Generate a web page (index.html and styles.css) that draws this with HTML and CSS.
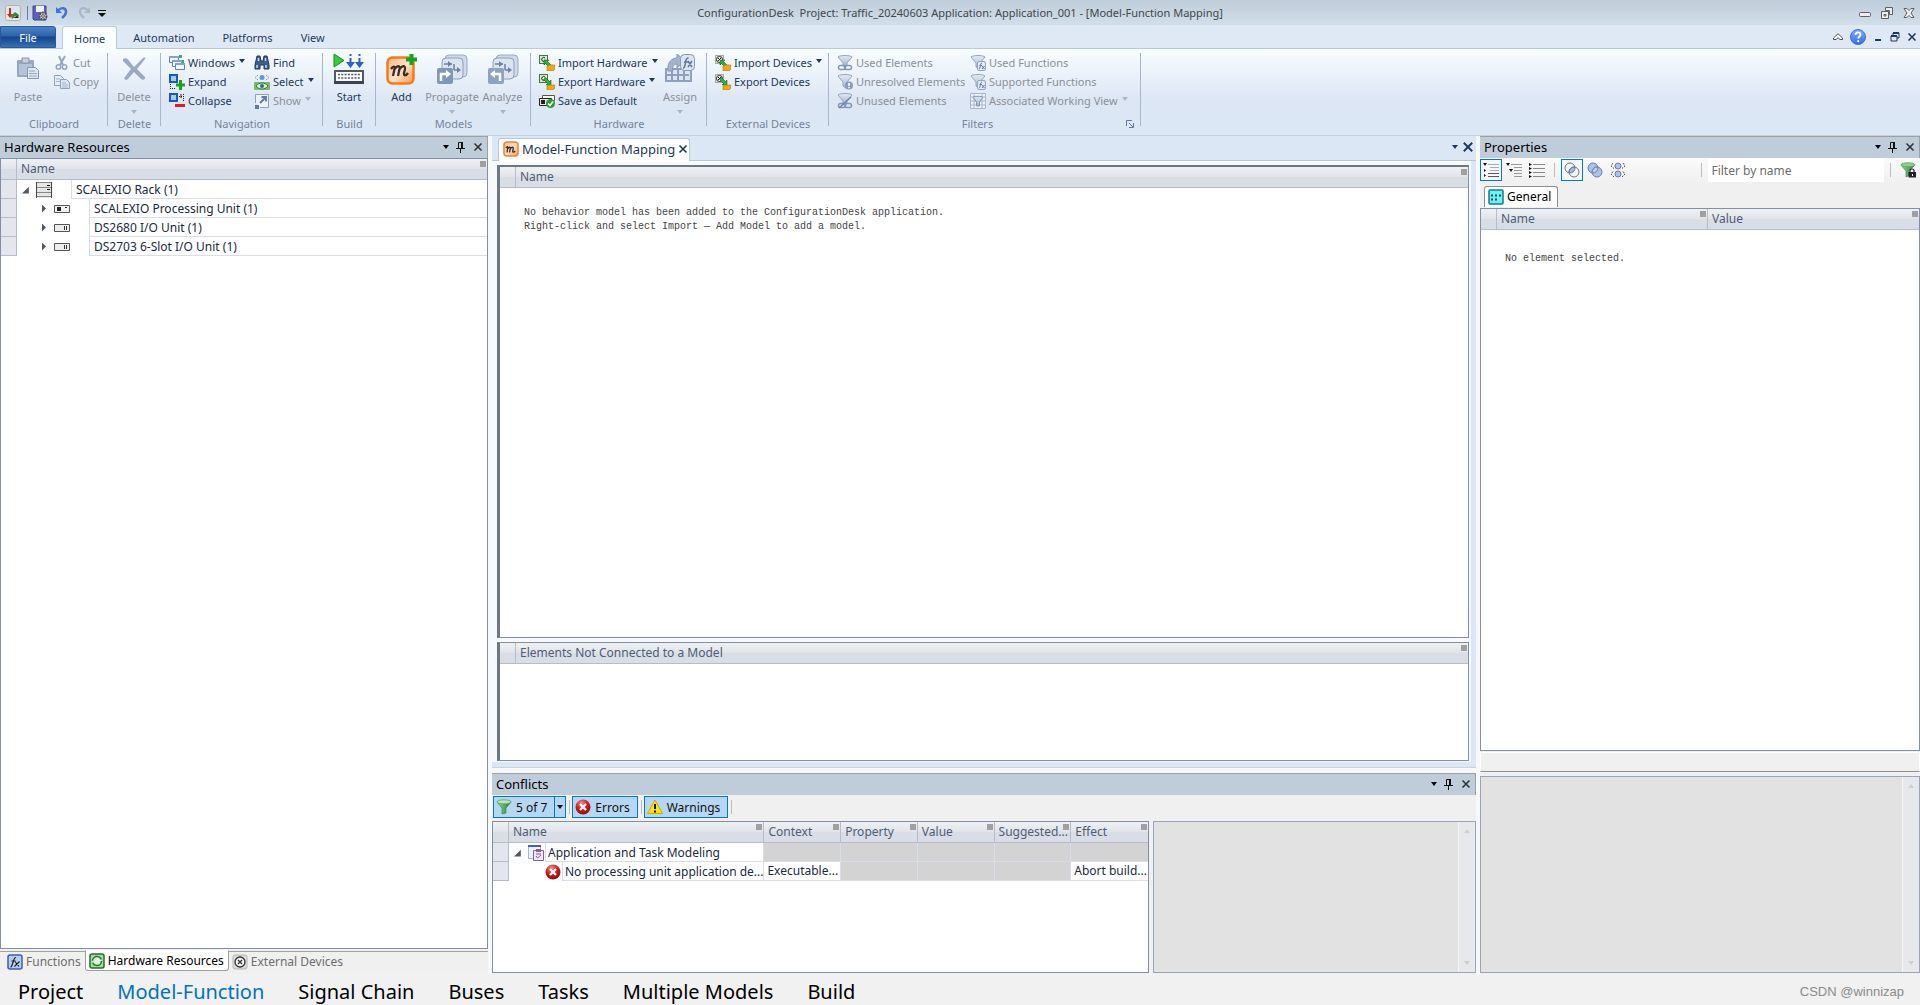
FILE: index.html
```html
<!DOCTYPE html>
<html lang="en">
<head>
    <meta charset="UTF-8">
    <meta name="viewport" content="width=device-width, initial-scale=1.0">
    <title>ConfigurationDesk</title>
    <link rel="stylesheet" href="styles.css">
</head>
<body>

    <!-- Icon sprite -->
    <svg class="sprite" aria-hidden="true">
        <defs>
            <linearGradient id="gOrange" x1="0" y1="0" x2="1" y2="1"><stop offset="0" stop-color="#ffb478"/><stop offset=".5" stop-color="#fde3cb"/><stop offset="1" stop-color="#ff9a4a"/></linearGradient>
            <linearGradient id="gGray" x1="0" y1="0" x2="0" y2="1"><stop offset="0" stop-color="#e4ebf4"/><stop offset="1" stop-color="#a3b2c8"/></linearGradient>
            <linearGradient id="gGreen" x1="0" y1="0" x2="1" y2="0"><stop offset="0" stop-color="#9edc9a"/><stop offset="1" stop-color="#1f7a2c"/></linearGradient>
            <radialGradient id="gRed" cx=".4" cy=".25" r=".8"><stop offset="0" stop-color="#f58a86"/><stop offset=".5" stop-color="#cf1b1b"/><stop offset="1" stop-color="#8f0a0a"/></radialGradient>
            <linearGradient id="gHelp" x1="0" y1="0" x2="0" y2="1"><stop offset="0" stop-color="#83aefc"/><stop offset="1" stop-color="#2f6df0"/></linearGradient>
        </defs>

        <symbol id="app" viewBox="0 0 16 16"><rect x=".5" y=".5" width="15" height="15" rx="2" fill="#e8e6e2" stroke="#b3b0aa"/><path d="M5 2h8v4H5z" fill="#cfeaf7"/><path d="M4 3h2v6h2l-3 4-3-4h2z" fill="#d22"/><path d="M6 11l4-4 4 3-1 3-3-2-3 3z" fill="#2c8a3c"/><path d="M8 13l4-2 2 2z" fill="#222"/></symbol>
        <symbol id="save" viewBox="0 0 16 16"><path d="M1 1h13v14H2l-1-1z" fill="#5a62c0" stroke="#3c4390"/><path d="M4 1h8v6H4z" fill="#eef1fb"/><circle cx="11" cy="11" r="3.5" fill="#c9ccd2" stroke="#4b4f58" stroke-width="2" stroke-dasharray="2 1"/><circle cx="11" cy="11" r="1.3" fill="#fff" stroke="#555"/></symbol>
        <symbol id="undo" viewBox="0 0 16 16"><path d="M4 5.500c3-3.500 8-3 8 1 0 3-2 5-4 6.500" fill="none" stroke="#3f73d2" stroke-width="2.400"/><path d="M2 2v6h6z" fill="#3f73d2"/></symbol>
        <symbol id="redo" viewBox="0 0 16 16"><path d="M12 5.500C9 2 4 2.500 4 6.500c0 3 2 5 4 6.500" fill="none" stroke="#a9b8ca" stroke-width="2.200"/><path d="M14 2v6H8z" fill="#a9b8ca"/></symbol>
        <symbol id="quickmenu" viewBox="0 0 8 8"><path d="M0 1h8v1H0zM0 4h8L4 8z" fill="#111"/></symbol>
        <symbol id="pin" viewBox="0 0 10 12"><path d="M2.500 7V1.500h4V7M0 7.500h9M4.500 8v4" fill="none" stroke="#111"/><path d="M5 1h2v6H5z" fill="#111"/></symbol>
        <symbol id="close" viewBox="0 0 10 10"><path d="M1.500 1.500l7 7M8.500 1.500l-7 7" fill="none" stroke="currentColor" stroke-width="1.600"/></symbol>
        <symbol id="caret" viewBox="0 0 6 4"><path d="M0 0h6L3 4z" fill="currentColor"/></symbol>
        <symbol id="winmin" viewBox="0 0 12 12"><rect x=".5" y="5.500" width="11" height="4" rx="1" fill="#eee" stroke="#5d6166"/></symbol>
        <symbol id="winrestore" viewBox="0 0 12 12"><path d="M4.500.500h7v7h-3v-4h-4z" fill="#eee" stroke="#5d6166"/><path d="M.5 4.500h7v7h-7z" fill="#eee" stroke="#5d6166"/><path d="M3 7.500h2v1.500H3z" fill="none" stroke="#5d6166"/></symbol>
        <symbol id="winclose" viewBox="0 0 12 12"><path d="M1 1.500h3l2 2 2-2h3L8 6l3 4.500H8l-2-2-2 2H1L4 6z" fill="#eee" stroke="#5d6166"/></symbol>
        <symbol id="mdimin" viewBox="0 0 10 10"><path d="M2 7h6v2H2z" fill="#1e395b"/></symbol>
        <symbol id="mdirestore" viewBox="0 0 10 10"><path d="M3 3V1h6v5H7M1 4h6v5H1z" fill="none" stroke="#1e395b"/><path d="M3 1h6M1 4h6" stroke="#1e395b" stroke-width="2"/></symbol>
        <symbol id="collapse" viewBox="0 0 10 8"><path d="M.5 5L5 .700 9.500 5v1.500H7L5 4.700 3 6.500H.500z" fill="#fff" stroke="#4a4f57"/></symbol>
        <symbol id="help" viewBox="0 0 16 16"><circle cx="8" cy="8" r="7.500" fill="url(#gHelp)" stroke="#3d6fd8"/><path d="M5.500 6c0-3.500 5-3.300 5-.400 0 1.800-2.300 2-2.300 4" fill="none" stroke="#fff" stroke-width="1.800"/><circle cx="8.200" cy="12.200" r="1.100" fill="#fff"/></symbol>

        <symbol id="paste" viewBox="0 0 32 32"><rect x="5" y="7" width="17" height="17" rx="1" fill="#97a8c1"/><path d="M10 5h7v5h-7z" fill="#c6d1e0" stroke="#8496b2"/><path d="M7 11h13v11H7z" fill="#b6c4d7"/><path d="M15.500 14.500h8l3 3v8h-11z" fill="#dfe7f1" stroke="#8496b2"/><path d="M17 18h6M17 20.500h8M17 23h8" stroke="#97a8c1"/></symbol>
        <symbol id="cut" viewBox="0 0 16 16"><path d="M5 1l4 9M11 1L6 10" stroke="#97a6bd" stroke-width="2"/><circle cx="4.500" cy="12" r="2.200" fill="none" stroke="#97a6bd" stroke-width="1.600"/><circle cx="10.500" cy="12" r="2.200" fill="none" stroke="#97a6bd" stroke-width="1.600"/></symbol>
        <symbol id="copy" viewBox="0 0 16 16"><path d="M.5 1.500h6l3 3v7h-9z" fill="#e6edf6" stroke="#8fa1bb"/><path d="M6.500 5.500h6l3 3v6h-9z" fill="#dbe4ef" stroke="#8fa1bb"/><path d="M2 5h4M2 7.500h4M8 9h4M8 11h6M8 13h6" stroke="#a8b6ca"/></symbol>
        <symbol id="delete" viewBox="0 0 32 32"><path d="M5 6c3-2 5 0 7 3l4 5 9-9c2-1 3 0 2 1l-8 10 8 8c1 3-3 4-5 1l-6-6-6 7c-2 2-5 0-3-2l6-8-8-8z" fill="#9aaac4"/></symbol>
        <symbol id="windows" viewBox="0 0 16 16"><g fill="#f4f8fe" stroke="#5b7fc4"><path d="M.5 1.500h9v6h-9z"/><path d="M3.500 5.500h9v6h-9z"/><path d="M6.500 8.500h9v6h-9z"/></g><path d="M0 1h10v2H0zM3 5h10v2H3zM6 8h10v2H6z" fill="#7ea0e0"/><path d="M10 0h3v3h-3zM13 5h2v3h-2z" fill="#3bb54a"/></symbol>
        <symbol id="expand" viewBox="0 0 16 16"><rect x="1" y="1" width="7" height="7" fill="#a9cbff" stroke="#1d57c4" stroke-width="2"/><path d="M11.500 6v10M7 11h9" stroke="#17a51c" stroke-width="3"/><path d="M1.500 10v6M3 14.500h3" stroke="#222" stroke-dasharray="1 1"/></symbol>
        <symbol id="shrink" viewBox="0 0 16 16"><rect x="1" y="1" width="7" height="7" fill="#a9cbff" stroke="#1d57c4" stroke-width="2"/><path d="M6 11h10v3H6z" fill="#e01b22"/><path d="M10 3.500h3M14.500 1v8" stroke="#222" stroke-dasharray="1 1"/><path d="M12 1v4" stroke="#222"/></symbol>
        <symbol id="find" viewBox="0 0 16 16"><path d="M3 1h3l1 5h2l1-5h3l2 9v4h-5v-4H6v4H1v-4z" fill="#39618f" stroke="#1e395b"/><path d="M3 10v3M12 10v3M4.500 3v3M11.500 3v3" stroke="#c5daf2" stroke-width="1.500"/></symbol>
        <symbol id="select" viewBox="0 0 16 16"><path d="M4 1L1 3.500 4 6M12 1l3 2.500L12 6" fill="none" stroke="#8c97a6" stroke-dasharray="2 1"/><circle cx="8" cy="3.500" r="2.500" fill="#5b97e6"/><rect y="8" width="16" height="8" rx="1" fill="#7fb66f"/><path d="M2 12c3-4 9-4 12 0-3 4-9 4-12 0z" fill="#dcefd2" stroke="#3c7a30"/><circle cx="8" cy="12" r="2" fill="#2d6a9c"/></symbol>
        <symbol id="show" viewBox="0 0 16 16"><path d="M1.500 10V1.500h13v13H6" fill="#edf2f9" stroke="#8fa0ba"/><path d="M6 10l6-6M7.500 4H12v4.500" fill="none" stroke="#63789c" stroke-width="1.800"/><path d="M1 12h4v4H1z" fill="#63789c"/></symbol>
        <symbol id="start" viewBox="0 0 32 32"><path d="M1 1l10 6.500L1 14z" fill="#35cc3c" stroke="#1b8f25"/><path d="M17.500 1v2M17.500 5v6M26.500 1v2M26.500 5v6" stroke="#2a5fd0" stroke-width="2"/><path d="M13 9h9l-4.500 6zM22 9h9l-4.500 6z" fill="#2a5fd0"/><rect x="2" y="18" width="28" height="11" fill="#fafbfc" stroke="#4f5a69" stroke-width="2"/><path d="M1 28h30v3H1z" fill="#3b4452"/><path d="M5 21.500h22M5 25h22" stroke="#4f5a69" stroke-width="1.500" stroke-dasharray="2 1.300"/></symbol>
        <symbol id="model" viewBox="0 0 32 32"><rect x="1.500" y="4.500" width="26" height="26" rx="5" fill="url(#gOrange)" stroke="#f47b20" stroke-width="2.500"/><path d="M5 16c2-3 4-3 3.500 0L7 23M8 17c3-5 6-5 5.500-1L12 23M13 17c3-5 6.500-5 6-1l-1 4c-.5 3 2 3 4 0" fill="none" stroke="#38302b" stroke-width="2.300"/><path d="M25.500 1v11M20 6.500h11" stroke="#12a61a" stroke-width="4"/></symbol>
        <symbol id="modelsmall" viewBox="0 0 16 16"><rect x="1" y="1" width="14" height="14" rx="3" fill="url(#gOrange)" stroke="#f08435" stroke-width="1.500"/><path d="M3 7c1-2 2-1.500 1.700 0L4 11.500M4.700 8c1.500-3 2.900-2 2.600-.500L6.500 11.500M7.300 8c1.700-3 3.200-2 2.900-.500l-.5 2.500c-.2 1.700 1.200 1.500 2.500 0" fill="none" stroke="#33292a" stroke-width="1.300"/></symbol>
        <symbol id="propagate" viewBox="0 0 32 32"><rect x="9" y="2" width="22" height="22" rx="4" fill="#cfd9e7" stroke="#9aabc4"/><rect x="6" y="5" width="21" height="21" rx="4" fill="#dbe4f0" stroke="#8c9fbb"/><path d="M8 11h8M18 11v6M18 17h6" stroke="#6c82a5" stroke-width="1.500" fill="none"/><path d="M12 8v6l4-3zM21 14v6l4-3z" fill="#6c82a5"/><rect x="1" y="15" width="16" height="16" rx="2" fill="#8297b7"/><path d="M5 28v-7h6" fill="none" stroke="#fff" stroke-width="2.500"/><path d="M10 17l5 4-5 4z" fill="#fff"/></symbol>
        <symbol id="analyze" viewBox="0 0 32 32"><rect x="9" y="2" width="22" height="22" rx="4" fill="#cfd9e7" stroke="#9aabc4"/><rect x="6" y="5" width="21" height="21" rx="4" fill="#dbe4f0" stroke="#8c9fbb"/><path d="M8 11h8M18 11v6M18 17h6" stroke="#6c82a5" stroke-width="1.500" fill="none"/><path d="M12 8v6l4-3zM21 14v6l4-3z" fill="#6c82a5"/><rect x="1" y="15" width="16" height="16" rx="2" fill="#8fa3c0"/><path d="M13 28v-7H8" fill="none" stroke="#fff" stroke-width="2.500"/><path d="M8 17l-5 4 5 4z" fill="#fff"/></symbol>
        <symbol id="hwimport" viewBox="0 0 16 16"><rect x=".5" y=".5" width="8" height="8" fill="#d9ead3" stroke="#3f7a3c"/><path d="M6 3a2 2 0 1 0 0 3" fill="none" stroke="#222"/><path d="M5 5h5l-1.500 1.500 4 4-2 2-4-4L5 10z" fill="#2eae35" stroke="#176b1e" stroke-width=".6"/><path d="M8 11l3-1h5v4l-2 2H8z" fill="#f0a818" stroke="#b87207" stroke-width=".6"/></symbol>
        <symbol id="hwexport" viewBox="0 0 16 16"><rect x=".5" y=".5" width="8" height="8" fill="#d9ead3" stroke="#3f7a3c"/><path d="M6 3a2 2 0 1 0 0 3" fill="none" stroke="#222"/><path d="M12 11H7l1.500-1.500-4-4 2-2 4 4L12 6z" fill="#2eae35" stroke="#176b1e" stroke-width=".6"/><path d="M8 12l3-1h5v3l-2 2H8z" fill="#f0a818" stroke="#b87207" stroke-width=".6"/></symbol>
        <symbol id="hwsave" viewBox="0 0 16 16"><path d="M3.500 2.500h12v5h-12z" fill="#fff" stroke="#555"/><path d="M.5 5.500h12v7H.500z" fill="#e9e9e9" stroke="#222"/><path d="M2 7h4v4H2z" fill="#222"/><circle cx="11.500" cy="10.500" r="4.500" fill="#2a9a35"/><path d="M9 10.500l2 2 3-4" fill="none" stroke="#fff" stroke-width="1.600"/></symbol>
        <symbol id="assign" viewBox="0 0 32 32"><path d="M1 15h27v14H1z" fill="#dbe4ef"/><path d="M1 16h27M2 15v14M8 15v14M14 15v14M20 15v14M1 22h24M27 17v12M1 28h26" fill="none" stroke="#8da0bd" stroke-width="2"/><path d="M4 18c-1-9 4-13 9-13V1l8 7-8 7v-4c-3 0-5 2-4 7z" fill="#a3b3ca" stroke="#8599b8"/><rect x="16.500" y="1.500" width="14" height="16" rx="4" fill="#dbe4f0" stroke="#8599b8"/><path d="M19 15c2 0 2-3 2.500-6s1-4 3-4M20 9h4M24 8l4 6M28 8l-4 6" fill="none" stroke="#5f7699" stroke-width="1.500"/></symbol>
        <symbol id="devimport" viewBox="0 0 16 16"><rect x=".5" y=".5" width="8" height="8" fill="#e0e0dc" stroke="#aaa"/><circle cx="4.500" cy="4.500" r="3" fill="#fff" stroke="#222"/><path d="M3 3l3 3M6 3L3 6" stroke="#222"/><path d="M5 5h5l-1.500 1.500 4 4-2 2-4-4L5 10z" fill="#2eae35" stroke="#176b1e" stroke-width=".6"/><path d="M8 11l3-1h5v4l-2 2H8z" fill="#f0a818" stroke="#b87207" stroke-width=".6"/></symbol>
        <symbol id="devexport" viewBox="0 0 16 16"><rect x=".5" y=".5" width="8" height="8" fill="#e0e0dc" stroke="#aaa"/><circle cx="4.500" cy="4.500" r="3" fill="#fff" stroke="#222"/><path d="M3 3l3 3M6 3L3 6" stroke="#222"/><path d="M12 11H7l1.500-1.500-4-4 2-2 4 4L12 6z" fill="#2eae35" stroke="#176b1e" stroke-width=".6"/><path d="M8 12l3-1h5v3l-2 2H8z" fill="#f0a818" stroke="#b87207" stroke-width=".6"/></symbol>
        <symbol id="fused" viewBox="0 0 16 16"><path d="M1 2c2-2 12-2 14 0l-5 6v3H6V8z" fill="url(#gGray)" stroke="#94a5be"/><rect x="1.500" y="10.500" width="7" height="4" rx="2" fill="none" stroke="#8497b4" stroke-width="1.500"/><rect x="7.500" y="10.500" width="7" height="4" rx="2" fill="none" stroke="#8497b4" stroke-width="1.500"/></symbol>
        <symbol id="funresolved" viewBox="0 0 16 16"><path d="M1 2c2-2 12-2 14 0l-5 6v7l-4-3V8z" fill="url(#gGray)" stroke="#94a5be"/><circle cx="12" cy="11.500" r="4" fill="#8a9cb8"/><path d="M12 9v3M12 13v1.200" stroke="#fff" stroke-width="1.600"/></symbol>
        <symbol id="funused" viewBox="0 0 16 16"><path d="M1 2c2-2 12-2 14 0l-5 6v3H6V8z" fill="url(#gGray)" stroke="#94a5be"/><rect x="1.500" y="10.500" width="7" height="4" rx="2" fill="none" stroke="#8497b4" stroke-width="1.500"/><rect x="7.500" y="10.500" width="7" height="4" rx="2" fill="none" stroke="#8497b4" stroke-width="1.500"/><path d="M2 15L14 4" stroke="#7286a6" stroke-width="1.600"/></symbol>
        <symbol id="ffunction" viewBox="0 0 16 16"><path d="M1 2c2-2 12-2 14 0l-5 6v7l-4-3V8z" fill="url(#gGray)" stroke="#94a5be"/><rect x="7.500" y="6.500" width="8" height="9" rx="1.500" fill="#e2e9f3" stroke="#94a5be"/><path d="M9 14c1.500 0 1-6 3-6M9.500 10.500h2.500M12 11l2.500 3M14.500 11L12 14" fill="none" stroke="#667c9f"/></symbol>
        <symbol id="fview" viewBox="0 0 16 16"><path d="M.5.500h15v15H.500zM.5 4h15M.5 8h15M.5 12h15M4 .500v15M12 .500v15" fill="#eff3f9" stroke="#a9b7cb"/><path d="M3 4c2-1 8-1 10 0L9.500 9v4h-3V9z" fill="url(#gGray)" stroke="#8497b4"/></symbol>
        <symbol id="launcher" viewBox="0 0 8 8"><path d="M.5 6V.500H6M3 3l4 4M7.500 3v4.500H3" fill="none" stroke="#63789c"/></symbol>

        <symbol id="rack" viewBox="0 0 16 16"><path d="M0 0h16v16H0z" fill="#e6e6e6"/><path d="M.5 0v16M15.500 0v16" stroke="#444"/><path d="M1 .500h14M1 5.500h14M1 10.500h14M1 14.500h14" stroke="#888"/><path d="M11 3.500h3M11 7.500h3" stroke="#111"/></symbol>
        <symbol id="cpu" viewBox="0 0 16 8"><path d="M.5.500h15v7H.500z" fill="#f2f2f2" stroke="#555"/><path d="M3 2h4v4H3zM11 2h2v1h-2z" fill="#222"/></symbol>
        <symbol id="iounit" viewBox="0 0 16 8"><path d="M.5.500h15v7H.500z" fill="#ededed" stroke="#555"/><path d="M10.500 2v4M12.500 2v4" stroke="#333"/></symbol>
        <symbol id="fx" viewBox="0 0 16 16"><rect x="1" y="1" width="14" height="14" rx="2" fill="#b7cdf3" stroke="#3a5fb2" stroke-width="1.500"/><path d="M3.500 13C6 13 6 3 9 3.500M4.500 7h4M8 7.500l4 5M12.500 7.500L7.500 12.500" fill="none" stroke="#222" stroke-width="1.200"/></symbol>
        <symbol id="hw" viewBox="0 0 16 16"><rect x="1" y="1" width="14" height="14" rx="2" fill="#a8dba4" stroke="#26702a" stroke-width="1.500"/><circle cx="8" cy="8" r="4.500" fill="#ddf3da" stroke="#2a7f30" stroke-width="1.600" stroke-dasharray="12 2"/></symbol>
        <symbol id="ext" viewBox="0 0 16 16"><rect x="1" y="1" width="14" height="14" rx="2" fill="#dcdcdc" stroke="#b5b5b5"/><circle cx="8" cy="8" r="5" fill="#f2f2f2" stroke="#333" stroke-width="1.300"/><path d="M6 6l4 4M10 6l-4 4" stroke="#333" stroke-width="1.300"/></symbol>

        <symbol id="treelist" viewBox="0 0 16 16"><path d="M5 2.500h11M7 5.500h9M7 8.500h9" stroke="#aaa"/><path d="M5 11.500h11M5 14.500h11" stroke="#555"/><path d="M0 1h4L2 4zM1 7l2 1.500L1 10zM1 12l2 1.500L1 15z" fill="#111"/></symbol>
        <symbol id="treeindent" viewBox="0 0 16 16"><path d="M5 2.500h11M8 5.500h8M8 8.500h8M8 11.500h8M8 14.500h8" stroke="#999"/><path d="M0 1h4L2 4zM3 7h4L5 10z" fill="#111"/></symbol>
        <symbol id="flatlist" viewBox="0 0 16 16"><path d="M4 2.500h12M4 6.500h12M4 10.500h12M4 14.500h12" stroke="#888"/><path d="M0 1l3 1.500L0 4zM0 5l3 1.500L0 8zM0 9l3 1.500L0 12zM0 13l3 1.500L0 16z" fill="#111"/></symbol>
        <symbol id="intersect" viewBox="0 0 16 16"><g stroke="#6d7684"><circle cx="6" cy="6" r="5" fill="#f4f4f4"/><circle cx="10" cy="10" r="5" fill="#f4f4f4"/><path d="M5.200 10.900A5 5 0 0 1 10.900 5.100 5 5 0 0 1 5.200 10.900z" fill="#9db9f0"/></g></symbol>
        <symbol id="union" viewBox="0 0 16 16"><g stroke="#6d7f9f"><circle cx="6" cy="6" r="5" fill="#a9c2f2"/><circle cx="10" cy="10" r="5" fill="#a9c2f2"/><path d="M5.200 10.900A5 5 0 0 1 10.900 5.100 5 5 0 0 1 5.200 10.900z" fill="#bccff6"/></g></symbol>
        <symbol id="eyes" viewBox="0 0 16 16"><path d="M3 1L1 4l3 2.500M13 1l2 3-3 2.500M3 9.500L1 12l3 3M13 9.500l2 2.500-3 3" fill="none" stroke="#555" stroke-dasharray="2 1"/><circle cx="8" cy="4" r="3" fill="#a9c2f2" stroke="#6d7f9f"/><circle cx="8" cy="12" r="3" fill="#a9c2f2" stroke="#6d7f9f"/></symbol>
        <symbol id="filter" viewBox="0 0 16 16"><path d="M1 3l5 6v6l4-1V9l5-6z" fill="url(#gGreen)" stroke="#2f7f3a" stroke-width=".6"/><ellipse cx="8" cy="2.800" rx="7" ry="2" fill="#bfe6bd" stroke="#55a35c" stroke-width=".8"/></symbol>
        <symbol id="filterlock" viewBox="0 0 16 16"><path d="M1 3l5 6v6l3-1.500V9l6-6z" fill="url(#gGreen)" stroke="#2f7f3a" stroke-width=".6"/><ellipse cx="8" cy="2.800" rx="7" ry="2" fill="#8fd08d" stroke="#55a35c" stroke-width=".8"/><path d="M10 10V8.500c0-2 4-2 4 0V10" fill="none" stroke="#222" stroke-width="1.200"/><path d="M8.500 10H16v5.500H8.500z" fill="#222"/><path d="M12 12h1v2h-1z" fill="#fff"/></symbol>
        <symbol id="general" viewBox="0 0 16 16"><rect x="1" y="1" width="14" height="14" rx="1" fill="#66f5f5" stroke="#1a7a80" stroke-width="1.500"/><path d="M3 6.500h11M3 10.500h7" stroke="#345" stroke-width="2" stroke-dasharray="2 2"/></symbol>
        <symbol id="error" viewBox="0 0 16 16"><circle cx="8" cy="8" r="7.500" fill="url(#gRed)"/><path d="M5 5l6 6M11 5l-6 6" stroke="#fff" stroke-width="2.400"/></symbol>
        <symbol id="warning" viewBox="0 0 16 16"><path d="M8 1l7.500 13.500H.500z" fill="#ffe900" stroke="#d9a400" stroke-linejoin="round"/><path d="M8 5v5M8 11.500v2" stroke="#111" stroke-width="2"/></symbol>
        <symbol id="task" viewBox="0 0 16 16"><path d="M.5 1.500h12v12H.500z" fill="#edf2fb" stroke="#aab6d6"/><path d="M0 0h13v2H0z" fill="#3668d4"/><path d="M11 0h2v2h-2z" fill="#d22"/><path d="M5.500 5.500h10v10h-10z" fill="#f0e6f6" stroke="#8460a0"/><path d="M8 4h5v3H8z" fill="#8460a0"/><path d="M8 9h5M8 11l1.500 2L13 10" fill="none" stroke="#8460a0"/></symbol>
    </svg>

    <div class="window">

        <header class="titlebar">
            <div class="quick-access">
                <svg class="icon"><use href="#app"/></svg>
                <span class="quick-sep"></span>
                <button aria-label="Save"><svg class="icon"><use href="#save"/></svg></button>
                <button aria-label="Undo"><svg class="icon"><use href="#undo"/></svg></button>
                <button aria-label="Redo" disabled><svg class="icon"><use href="#redo"/></svg></button>
                <button aria-label="Customize"><svg class="icon-mini"><use href="#quickmenu"/></svg></button>
            </div>
            <h1>ConfigurationDesk&nbsp; Project: Traffic_20240603 Application: Application_001 - [Model-Function Mapping]</h1>
            <div class="window-buttons">
                <button aria-label="Minimize"><svg class="icon-small"><use href="#winmin"/></svg></button>
                <button aria-label="Restore"><svg class="icon-small"><use href="#winrestore"/></svg></button>
                <button aria-label="Close"><svg class="icon-small"><use href="#winclose"/></svg></button>
            </div>
        </header>

        <nav class="ribbon-tabs">
            <button class="file-tab">File</button>
            <button class="ribbon-tab active">Home</button>
            <button class="ribbon-tab">Automation</button>
            <button class="ribbon-tab">Platforms</button>
            <button class="ribbon-tab">View</button>
            <div class="mdi-buttons">
                <button aria-label="Collapse ribbon"><svg class="icon-close"><use href="#collapse"/></svg></button>
                <button aria-label="Help"><svg class="icon"><use href="#help"/></svg></button>
                <button aria-label="Minimize document"><svg class="icon-close"><use href="#mdimin"/></svg></button>
                <button aria-label="Restore document"><svg class="icon-close"><use href="#mdirestore"/></svg></button>
                <button aria-label="Close document"><svg class="icon-close"><use href="#close"/></svg></button>
            </div>
        </nav>

        <div class="ribbon">
            <section class="group clipboard">
                <div class="group-body">
                    <button class="big" disabled><svg class="icon-big"><use href="#paste"/></svg>Paste</button>
                    <div class="stack">
                        <button class="small" disabled><svg class="icon"><use href="#cut"/></svg>Cut</button>
                        <button class="small" disabled><svg class="icon"><use href="#copy"/></svg>Copy</button>
                    </div>
                </div>
                <h2>Clipboard</h2>
            </section>
            <section class="group single">
                <div class="group-body">
                    <button class="big" disabled><svg class="icon-big"><use href="#delete"/></svg>Delete<svg class="caret"><use href="#caret"/></svg></button>
                </div>
                <h2>Delete</h2>
            </section>
            <section class="group navigation">
                <div class="group-body">
                    <div class="stack">
                        <button class="small"><svg class="icon"><use href="#windows"/></svg>Windows<svg class="caret"><use href="#caret"/></svg></button>
                        <button class="small"><svg class="icon"><use href="#expand"/></svg>Expand</button>
                        <button class="small"><svg class="icon"><use href="#shrink"/></svg>Collapse</button>
                    </div>
                    <div class="stack">
                        <button class="small"><svg class="icon"><use href="#find"/></svg>Find</button>
                        <button class="small"><svg class="icon"><use href="#select"/></svg>Select<svg class="caret"><use href="#caret"/></svg></button>
                        <button class="small" disabled><svg class="icon"><use href="#show"/></svg>Show<svg class="caret"><use href="#caret"/></svg></button>
                    </div>
                </div>
                <h2>Navigation</h2>
            </section>
            <section class="group single">
                <div class="group-body">
                    <button class="big"><svg class="icon-big"><use href="#start"/></svg>Start</button>
                </div>
                <h2>Build</h2>
            </section>
            <section class="group models">
                <div class="group-body">
                    <button class="big"><svg class="icon-big"><use href="#model"/></svg>Add</button>
                    <button class="big wide" disabled><svg class="icon-big"><use href="#propagate"/></svg>Propagate<svg class="caret"><use href="#caret"/></svg></button>
                    <button class="big" disabled><svg class="icon-big"><use href="#analyze"/></svg>Analyze<svg class="caret"><use href="#caret"/></svg></button>
                </div>
                <h2>Models</h2>
            </section>
            <section class="group hardware">
                <div class="group-body">
                    <div class="stack">
                        <button class="small"><svg class="icon"><use href="#hwimport"/></svg>Import Hardware<svg class="caret"><use href="#caret"/></svg></button>
                        <button class="small"><svg class="icon"><use href="#hwexport"/></svg>Export Hardware<svg class="caret"><use href="#caret"/></svg></button>
                        <button class="small"><svg class="icon"><use href="#hwsave"/></svg>Save as Default</button>
                    </div>
                    <button class="big" disabled><svg class="icon-big"><use href="#assign"/></svg>Assign<svg class="caret"><use href="#caret"/></svg></button>
                </div>
                <h2>Hardware</h2>
            </section>
            <section class="group external">
                <div class="group-body">
                    <div class="stack">
                        <button class="small"><svg class="icon"><use href="#devimport"/></svg>Import Devices<svg class="caret"><use href="#caret"/></svg></button>
                        <button class="small"><svg class="icon"><use href="#devexport"/></svg>Export Devices</button>
                    </div>
                </div>
                <h2>External Devices</h2>
            </section>
            <section class="group filters">
                <div class="group-body">
                    <div class="stack">
                        <button class="small" disabled><svg class="icon"><use href="#fused"/></svg>Used Elements</button>
                        <button class="small" disabled><svg class="icon"><use href="#funresolved"/></svg>Unresolved Elements</button>
                        <button class="small" disabled><svg class="icon"><use href="#funused"/></svg>Unused Elements</button>
                    </div>
                    <div class="stack">
                        <button class="small" disabled><svg class="icon"><use href="#ffunction"/></svg>Used Functions</button>
                        <button class="small" disabled><svg class="icon"><use href="#ffunction"/></svg>Supported Functions</button>
                        <button class="small" disabled><svg class="icon"><use href="#fview"/></svg>Associated Working View<svg class="caret"><use href="#caret"/></svg></button>
                    </div>
                </div>
                <div class="group-foot">
                    <h2>Filters</h2>
                    <button aria-label="Filter options"><svg class="icon-mini"><use href="#launcher"/></svg></button>
                </div>
            </section>
        </div>

        <main class="workspace">

            <section class="column left">
                <div class="dock-title">
                    <h2>Hardware Resources</h2>
                    <button aria-label="Window menu"><svg class="caret"><use href="#caret"/></svg></button>
                    <button aria-label="Pin"><svg class="icon-pin"><use href="#pin"/></svg></button>
                    <button aria-label="Close"><svg class="icon-close"><use href="#close"/></svg></button>
                </div>
                <div class="grid-box">
                    <table class="grid">
                        <colgroup><col class="col-mark"><col></colgroup>
                        <thead>
                            <tr><th></th><th>Name<span class="mark"></span></th></tr>
                        </thead>
                        <tbody>
                            <tr><td></td><td class="tree-cell"><div class="tree-row"><button class="expander open" aria-label="Collapse row"></button><svg class="icon"><use href="#rack"/></svg><span class="label">SCALEXIO Rack (1)</span></div></td></tr>
                            <tr><td></td><td class="tree-cell"><div class="tree-row child"><button class="expander" aria-label="Expand row"></button><svg class="icon-unit"><use href="#cpu"/></svg><span class="label">SCALEXIO Processing Unit (1)</span></div></td></tr>
                            <tr><td></td><td class="tree-cell"><div class="tree-row child"><button class="expander" aria-label="Expand row"></button><svg class="icon-unit"><use href="#iounit"/></svg><span class="label">DS2680 I/O Unit (1)</span></div></td></tr>
                            <tr><td></td><td class="tree-cell"><div class="tree-row child"><button class="expander" aria-label="Expand row"></button><svg class="icon-unit"><use href="#iounit"/></svg><span class="label">DS2703 6-Slot I/O Unit (1)</span></div></td></tr>
                        </tbody>
                    </table>
                </div>
                <div class="dock-tabs">
                    <button class="dock-tab"><svg class="icon"><use href="#fx"/></svg>Functions</button>
                    <button class="dock-tab active"><svg class="icon"><use href="#hw"/></svg>Hardware Resources</button>
                    <button class="dock-tab"><svg class="icon"><use href="#ext"/></svg>External Devices</button>
                </div>
            </section>

            <section class="column center">
                <div class="document">
                    <div class="doc-strip">
                        <div class="doc-tab">
                            <svg class="icon"><use href="#modelsmall"/></svg>
                            <h2>Model-Function Mapping</h2>
                            <button aria-label="Close tab"><svg class="icon-close"><use href="#close"/></svg></button>
                        </div>
                        <div class="doc-tools">
                            <button aria-label="Tab list"><svg class="caret"><use href="#caret"/></svg></button>
                            <button aria-label="Close"><svg class="icon-small"><use href="#close"/></svg></button>
                        </div>
                    </div>
                    <div class="doc-frame">
                        <div class="grid-box mapping">
                            <table class="grid">
                                <colgroup><col class="col-mark"><col></colgroup>
                                <thead><tr><th></th><th>Name<span class="mark"></span></th></tr></thead>
                            </table>
                            <p class="message">No behavior model has been added to the ConfigurationDesk application.<br>Right-click and select Import — Add Model to add a model.</p>
                        </div>
                        <div class="grid-box unconnected">
                            <table class="grid">
                                <colgroup><col class="col-mark"><col></colgroup>
                                <thead><tr><th></th><th>Elements Not Connected to a Model<span class="mark"></span></th></tr></thead>
                            </table>
                        </div>
                    </div>
                </div>

                <div class="conflicts">
                    <div class="dock-title">
                        <h2>Conflicts</h2>
                        <button aria-label="Window menu"><svg class="caret"><use href="#caret"/></svg></button>
                        <button aria-label="Pin"><svg class="icon-pin"><use href="#pin"/></svg></button>
                        <button aria-label="Close"><svg class="icon-close"><use href="#close"/></svg></button>
                    </div>
                    <div class="conflict-tools">
                        <div class="split-button">
                            <button class="toggle"><svg class="icon"><use href="#filter"/></svg>5 of 7</button>
                            <button class="toggle drop" aria-label="Filter menu"><svg class="caret"><use href="#caret"/></svg></button>
                        </div>
                        <span class="tool-sep"></span>
                        <button class="toggle"><svg class="icon"><use href="#error"/></svg>Errors</button>
                        <span class="tool-sep"></span>
                        <button class="toggle"><svg class="icon"><use href="#warning"/></svg>Warnings</button>
                        <span class="tool-sep"></span>
                    </div>
                    <div class="conflict-body">
                        <div class="grid-box">
                            <table class="grid conflict-grid">
                                <colgroup><col class="col-mark"><col class="col-name"><col span="5"></colgroup>
                                <thead>
                                    <tr>
                                        <th></th>
                                        <th>Name<span class="mark"></span></th>
                                        <th>Context<span class="mark"></span></th>
                                        <th>Property<span class="mark"></span></th>
                                        <th>Value<span class="mark"></span></th>
                                        <th>Suggested...<span class="mark"></span></th>
                                        <th>Effect<span class="mark"></span></th>
                                    </tr>
                                </thead>
                                <tbody>
                                    <tr>
                                        <td></td>
                                        <td class="tree-cell"><div class="tree-row"><button class="expander open" aria-label="Collapse row"></button><svg class="icon"><use href="#task"/></svg><span class="label">Application and Task Modeling</span></div></td>
                                        <td class="empty"></td><td class="empty"></td><td class="empty"></td><td class="empty"></td><td class="empty"></td>
                                    </tr>
                                    <tr>
                                        <td></td>
                                        <td class="tree-cell"><div class="tree-row leaf"><svg class="icon"><use href="#error"/></svg><span class="label">No processing unit application de...</span></div></td>
                                        <td>Executable...</td><td class="empty"></td><td class="empty"></td><td class="empty"></td><td>Abort build...</td>
                                    </tr>
                                </tbody>
                            </table>
                        </div>
                        <div class="detail-pane">
                            <div class="scroll-track"><svg class="caret up"><use href="#caret"/></svg><svg class="caret"><use href="#caret"/></svg></div>
                        </div>
                    </div>
                </div>
            </section>

            <section class="column right">
                <div class="dock-title">
                    <h2>Properties</h2>
                    <button aria-label="Window menu"><svg class="caret"><use href="#caret"/></svg></button>
                    <button aria-label="Pin"><svg class="icon-pin"><use href="#pin"/></svg></button>
                    <button aria-label="Close"><svg class="icon-close"><use href="#close"/></svg></button>
                </div>
                <div class="prop-tools">
                    <button class="tool on" aria-label="Tree view"><svg class="icon"><use href="#treelist"/></svg></button>
                    <button class="tool" aria-label="Indented view"><svg class="icon"><use href="#treeindent"/></svg></button>
                    <button class="tool" aria-label="Flat view"><svg class="icon"><use href="#flatlist"/></svg></button>
                    <span class="tool-sep"></span>
                    <button class="tool on" aria-label="Common properties"><svg class="icon"><use href="#intersect"/></svg></button>
                    <button class="tool" aria-label="All properties"><svg class="icon"><use href="#union"/></svg></button>
                    <button class="tool" aria-label="Visible properties"><svg class="icon"><use href="#eyes"/></svg></button>
                    <span class="tool-sep push"></span>
                    <input class="filter-input" type="text" placeholder="Filter by name" aria-label="Filter by name">
                    <span class="tool-sep"></span>
                    <button class="tool" aria-label="Lock filter"><svg class="icon"><use href="#filterlock"/></svg></button>
                </div>
                <div class="prop-tabs">
                    <button class="prop-tab"><svg class="icon"><use href="#general"/></svg>General</button>
                </div>
                <div class="grid-box">
                    <table class="grid">
                        <colgroup><col class="col-mark"><col span="2"></colgroup>
                        <thead><tr><th></th><th>Name<span class="mark"></span></th><th>Value<span class="mark"></span></th></tr></thead>
                    </table>
                    <p class="message">No element selected.</p>
                </div>
                <div class="prop-hint"></div>
                <div class="detail-pane description">
                    <div class="scroll-track"><svg class="caret up"><use href="#caret"/></svg><svg class="caret"><use href="#caret"/></svg></div>
                </div>
            </section>

        </main>

        <footer class="view-bar">
            <a href="#project">Project</a>
            <a href="#model-function" class="current">Model-Function</a>
            <a href="#signal-chain">Signal Chain</a>
            <a href="#buses">Buses</a>
            <a href="#tasks">Tasks</a>
            <a href="#multiple-models">Multiple Models</a>
            <a href="#build">Build</a>
            <span class="credit">CSDN @winnizap</span>
        </footer>

    </div>

</body>
</html>
```
FILE: styles.css
```css
* {
    box-sizing: border-box;
}

body {
    margin: 0;
    font-family: "Noto Sans", "Open Sans", sans-serif;
    font-size: 12px;
    color: #1e395b;
    background-color: #f0f0f0;
}

h1, h2, p {
    margin: 0;
    font-size: inherit;
    font-weight: normal;
}

button {
    padding: 0;
    border: none;
    background: none;
    font: inherit;
    color: inherit;
    white-space: nowrap;
    cursor: pointer;
}

svg {
    display: block;
    flex: none;
}

.sprite {
    position: absolute;
    width: 0;
    height: 0;
}

.window {
    display: flex;
    flex-direction: column;
    min-height: 100vh;
}

/* Icon sizes */
.icon { width: 16px; height: 16px; }
.icon-big { width: 32px; height: 32px; }
.icon-small { width: 12px; height: 12px; }
.icon-close { width: 10px; height: 10px; }
.icon-mini { width: 8px; height: 8px; }
.icon-pin { width: 10px; height: 12px; }
.icon-unit { width: 16px; height: 8px; }
.caret { width: 6px; height: 4px; }

/* Title bar */
.titlebar {
    display: grid;
    grid-template-columns: 1fr auto 1fr;
    align-items: center;
    height: 25px;
    padding: 0 5px;
    background: linear-gradient(#bfccd9, #d2dfeb);
    font-size: 11px;
}

.titlebar h1 {
    color: #41464d;
}

.quick-access, .window-buttons, .mdi-buttons {
    display: flex;
    align-items: center;
    gap: 6px;
}

.quick-sep {
    width: 1px;
    height: 14px;
    margin-right: -2px;
    background-color: #6f7d8c;
}

.window-buttons {
    justify-content: flex-end;
    gap: 10px;
}

/* Ribbon tabs */
.ribbon-tabs {
    display: flex;
    align-items: flex-end;
    height: 24px;
    padding-top: 1px;
    border-bottom: 1px solid #bacadb;
    background-color: #dfe9f5;
    font-size: 11px;
}

.file-tab {
    width: 56px;
    height: 22px;
    margin-right: 6px;
    border: 1px solid #2b579f;
    border-radius: 0 3px 0 0;
    background: linear-gradient(#4a83c4, #2c64ad 45%, #17438c 50%, #2f73b8);
    color: #fff;
}

.ribbon-tab {
    height: 22px;
    padding: 0 14px;
}

.ribbon-tab.active {
    height: 23px;
    padding: 0 11px;
    margin-right: 2px;
    margin-bottom: -1px;
    border: 1px solid #bacadb;
    border-bottom: none;
    border-radius: 3px 3px 0 0;
    background-color: #fbfeff;
}

.mdi-buttons {
    align-self: center;
    gap: 7px;
    margin-left: auto;
    padding-right: 3px;
}

/* Ribbon */
.ribbon {
    display: flex;
    height: 87px;
    padding-top: 4px;
    border-bottom: 1px solid #c3d0e0;
    background: linear-gradient(#f8fdff, #dce6f4 60%, #dce8f5);
    font-size: 11px;
}

.group {
    display: flex;
    flex-direction: column;
    background: linear-gradient(#a5b6cd, #a5b6cd) right top / 1px 73px no-repeat;
}

.group-body {
    display: flex;
    height: 63px;
    padding-left: 8px;
}

.group h2 {
    line-height: 16px;
    text-align: center;
    color: #74849b;
}

.group-foot {
    display: flex;
    align-items: center;
    padding-right: 7px;
}

.group-foot h2 {
    flex: 1;
}

.clipboard { width: 108px; }
.single { width: 53px; }
.navigation { width: 162px; }
.models { width: 155px; }
.hardware { width: 176px; }
.external { width: 122px; }
.filters { width: 312px; }

.single .group-body, .models .group-body {
    padding-left: 4px;
}

.clipboard .group-body {
    padding-left: 6px;
}

.stack {
    display: flex;
    flex-direction: column;
}

.clipboard .stack { padding-left: 4px; }
.navigation .stack:first-child { width: 85px; }
.hardware .stack { width: 119px; }
.filters .stack:first-child { width: 133px; }

.small {
    display: flex;
    align-items: center;
    gap: 3px;
    height: 19px;
}

.small .caret {
    margin: 0 0 3px 1px;
}

.big {
    display: flex;
    flex-direction: column;
    align-items: center;
    width: 44px;
    line-height: 16px;
}

.big .icon-big {
    margin-bottom: 4px;
}

.big .caret {
    margin-top: 5px;
}

.models .big { width: 43px; }

.models .wide { width: 58px; }

.group button:disabled {
    color: #8b9098;
}

.group button:disabled .caret {
    color: #a9b5c6;
}

/* Workspace */
.workspace {
    display: grid;
    grid-template-columns: 488fr 984fr 440fr;
    gap: 4px;
    flex: 1;
    background-color: #f7f8fa;
}

.column {
    display: flex;
    flex-direction: column;
    min-width: 0;
    background-color: #f0f0f0;
}

.dock-title {
    display: flex;
    align-items: center;
    gap: 7px;
    height: 22px;
    padding: 0 4px 2px 4px;
    border-top: 1px solid #a0a0a0;
    border-right: 1px solid #a0a0a0;
    background-color: #bfcddb;
    color: #000;
}

.dock-title h2 {
    flex: 1;
    font-size: 13px;
    line-height: 20px;
}

.dock-title .icon-close {
    color: #333;
}

.grid-box {
    flex: 1;
    min-width: 0;
    border: 1px solid #828fa6;
    background-color: #fff;
}

.grid {
    width: 100%;
    border-collapse: separate;
    border-spacing: 0;
    table-layout: fixed;
    color: #1b2a41;
}

.grid .col-mark {
    width: 16px;
}

.grid th {
    position: relative;
    height: 21px;
    padding: 0 4px;
    border-right: 1px solid #b4bccd;
    border-bottom: 1px solid #b4bccd;
    background: linear-gradient(#eef1f4, #e0e4e9 50%, #d9dde6 50%);
    font-weight: normal;
    line-height: 16px;
    text-align: left;
    white-space: nowrap;
    color: #4f5d74;
}

.grid th:last-child, .grid td:last-child {
    border-right: none;
}

.mark {
    position: absolute;
    top: 2px;
    right: 1px;
    width: 6px;
    height: 6px;
    background-color: #a0a0a0;
}

.grid td {
    height: 19px;
    padding: 0 3px;
    border-right: 1px solid #d9dde8;
    border-bottom: 1px solid #d9dde8;
    line-height: 18px;
    white-space: nowrap;
}

.grid td:first-child {
    border-color: #b4bccd;
    background-color: #e3e6ed;
}

.grid .tree-cell {
    padding: 0;
    border-bottom: none;
}

.grid .empty {
    background-color: #d3d3d3;
}

.tree-row {
    display: flex;
    align-items: center;
    height: 19px;
    padding-left: 5px;
}

.tree-row.child { padding-left: 23px; }

.tree-row.leaf { padding-left: 36px; }

.expander {
    width: 8px;
    height: 8px;
    margin-right: 6px;
    background-color: #4e5766;
    clip-path: polygon(25% 0, 75% 50%, 25% 100%);
}

.expander.open {
    clip-path: polygon(85% 15%, 85% 100%, 0 100%);
}

.label {
    flex: 1;
    min-width: 0;
    height: 19px;
    margin-left: 19px;
    padding-left: 4px;
    border-left: 1px solid #d9dde8;
    border-bottom: 1px solid #d9dde8;
    line-height: 19px;
}

.conflict-grid .label {
    margin-left: 1px;
    padding-left: 2px;
}

.message {
    padding: 22px 0 0 24px;
    font-family: "Liberation Mono", monospace;
    font-size: 10px;
    line-height: 14px;
    color: #444;
}

.mapping .message {
    padding-top: 18px;
}

/* Left dock tabs */
.dock-tabs {
    display: flex;
    height: 23px;
    margin-top: 2px;
    padding-left: 4px;
    border-top: 1px solid #a0a0a0;
}

.dock-tab {
    display: flex;
    align-items: center;
    gap: 3px;
    height: 19px;
    padding: 0 4px 0 3px;
    color: #6d6d6d;
}

.dock-tab.active {
    height: 21px;
    margin-top: -2px;
    border: 1px solid #a0a0a0;
    border-top-color: #fff;
    border-radius: 0 0 3px 3px;
    background-color: #fff;
    color: #000;
}

/* Document area */
.column.center {
    gap: 5px;
    background-color: #f7f8fa;
}

.document {
    display: flex;
    flex-direction: column;
    flex: 1;
    border-bottom: 1px solid #c5d3e4;
    background-color: #dce7f5;
}

.doc-strip {
    display: flex;
    justify-content: space-between;
    align-items: flex-end;
    height: 25px;
    padding: 0 2px 0 6px;
    border-bottom: 1px solid #b7c6da;
}

.doc-tab {
    display: flex;
    align-items: center;
    gap: 3px;
    height: 23px;
    margin-bottom: -1px;
    padding: 0 1px 2px 4px;
    border: 1px solid #b7c6da;
    border-bottom: none;
    border-radius: 3px 3px 0 0;
    background-color: #fff;
}

.doc-tab h2 {
    font-size: 13px;
    line-height: 20px;
}

.doc-tools {
    display: flex;
    align-items: center;
    gap: 4px;
    height: 22px;
    padding-bottom: 4px;
}

.doc-frame {
    display: flex;
    flex-direction: column;
    flex: 1;
    gap: 4px;
    margin: 0 5px 5px 0;
    padding: 3px 2px 1px 5px;
    border-top: 1px solid #fff;
    background-color: #f6faff;
}

.doc-frame .grid-box {
    border-left: 3px solid #6f7783;
}

.doc-frame .mapping {
    border-top: 2px solid #6f7783;
}

.doc-frame .unconnected {
    flex: none;
    height: 119px;
}

/* Conflicts */
.conflicts {
    display: flex;
    flex-direction: column;
    height: 201px;
    background-color: #f0f0f0;
}

.conflict-tools {
    display: flex;
    align-items: center;
    gap: 2px;
    height: 26px;
    padding: 0 0 2px 1px;
}

.split-button {
    display: flex;
}

.toggle {
    display: flex;
    align-items: center;
    gap: 4px;
    height: 22px;
    padding: 0 7px 0 2px;
    border: 1px solid #0078d7;
    background-color: #b6d6f2;
    color: #111;
}

.toggle.drop {
    padding: 0 2px;
    border-left: none;
}

.tool-sep {
    width: 1px;
    height: 14px;
    margin-left: 1px;
    background-color: #bdbdbd;
}

.conflict-body {
    display: grid;
    grid-template-columns: 657fr 323fr;
    gap: 4px;
    flex: 1;
    padding-bottom: 1px;
}

.conflict-grid .col-name {
    width: 39%;
}

.detail-pane {
    display: flex;
    justify-content: flex-end;
    border: 1px solid #98a5bc;
    background-color: #e2e2e2;
}

.scroll-track {
    display: flex;
    flex-direction: column;
    justify-content: space-between;
    align-items: center;
    width: 17px;
    padding: 7px 0;
    border-left: 1px solid #f5f5f5;
    background-color: #e7e8ec;
    color: #cfcfcf;
}

.caret.up {
    transform: rotate(180deg);
}

/* Properties */
.prop-tools {
    display: flex;
    align-items: center;
    gap: 1px;
    height: 25px;
    padding: 0 1px 1px 0;
    background: linear-gradient(#fafafa, #f0f0f0);
}

.tool {
    display: flex;
    align-items: center;
    justify-content: center;
    width: 22px;
    height: 22px;
    border: 1px solid transparent;
}

.tool.on {
    border-color: #0078d7;
    background-color: #f4f8fc;
}

.prop-tools .tool-sep {
    margin: 0 5px;
}

.prop-tools .push {
    margin-left: auto;
}

.filter-input {
    width: 40%;
    height: 23px;
    padding: 0 3px;
    border: none;
    background-color: #fff;
    font: inherit;
}

.filter-input::placeholder {
    color: #6d6d6d;
    opacity: 1;
}

.prop-tabs {
    display: flex;
    align-items: flex-end;
    height: 25px;
    padding: 0 0 1px 4px;
}

.prop-tab {
    display: flex;
    align-items: center;
    gap: 3px;
    height: 21px;
    padding: 0 6px 1px 3px;
    border: 1px solid #8f8f8f;
    border-bottom: none;
    border-radius: 3px 3px 0 0;
    background-color: #fff;
    color: #000;
}

.prop-hint {
    height: 20px;
    margin-top: 1px;
    border: 1px solid #fff;
    border-bottom-color: #8f8f8f;
}

.description {
    height: 197px;
    margin-top: 4px;
    margin-bottom: 1px;
}

/* Bottom view switcher */
.view-bar {
    display: flex;
    align-items: center;
    gap: 34px;
    height: 31px;
    padding: 3px 16px 0 18px;
    background-color: #f1f1f1;
    font-size: 20px;
}

.view-bar a {
    color: #000;
    text-decoration: none;
}

.view-bar .current {
    color: #0072c9;
}

.credit {
    margin-left: auto;
    font-family: "Liberation Sans", Arial, sans-serif;
    font-size: 13px;
    color: #8a8a8a;
}
```
